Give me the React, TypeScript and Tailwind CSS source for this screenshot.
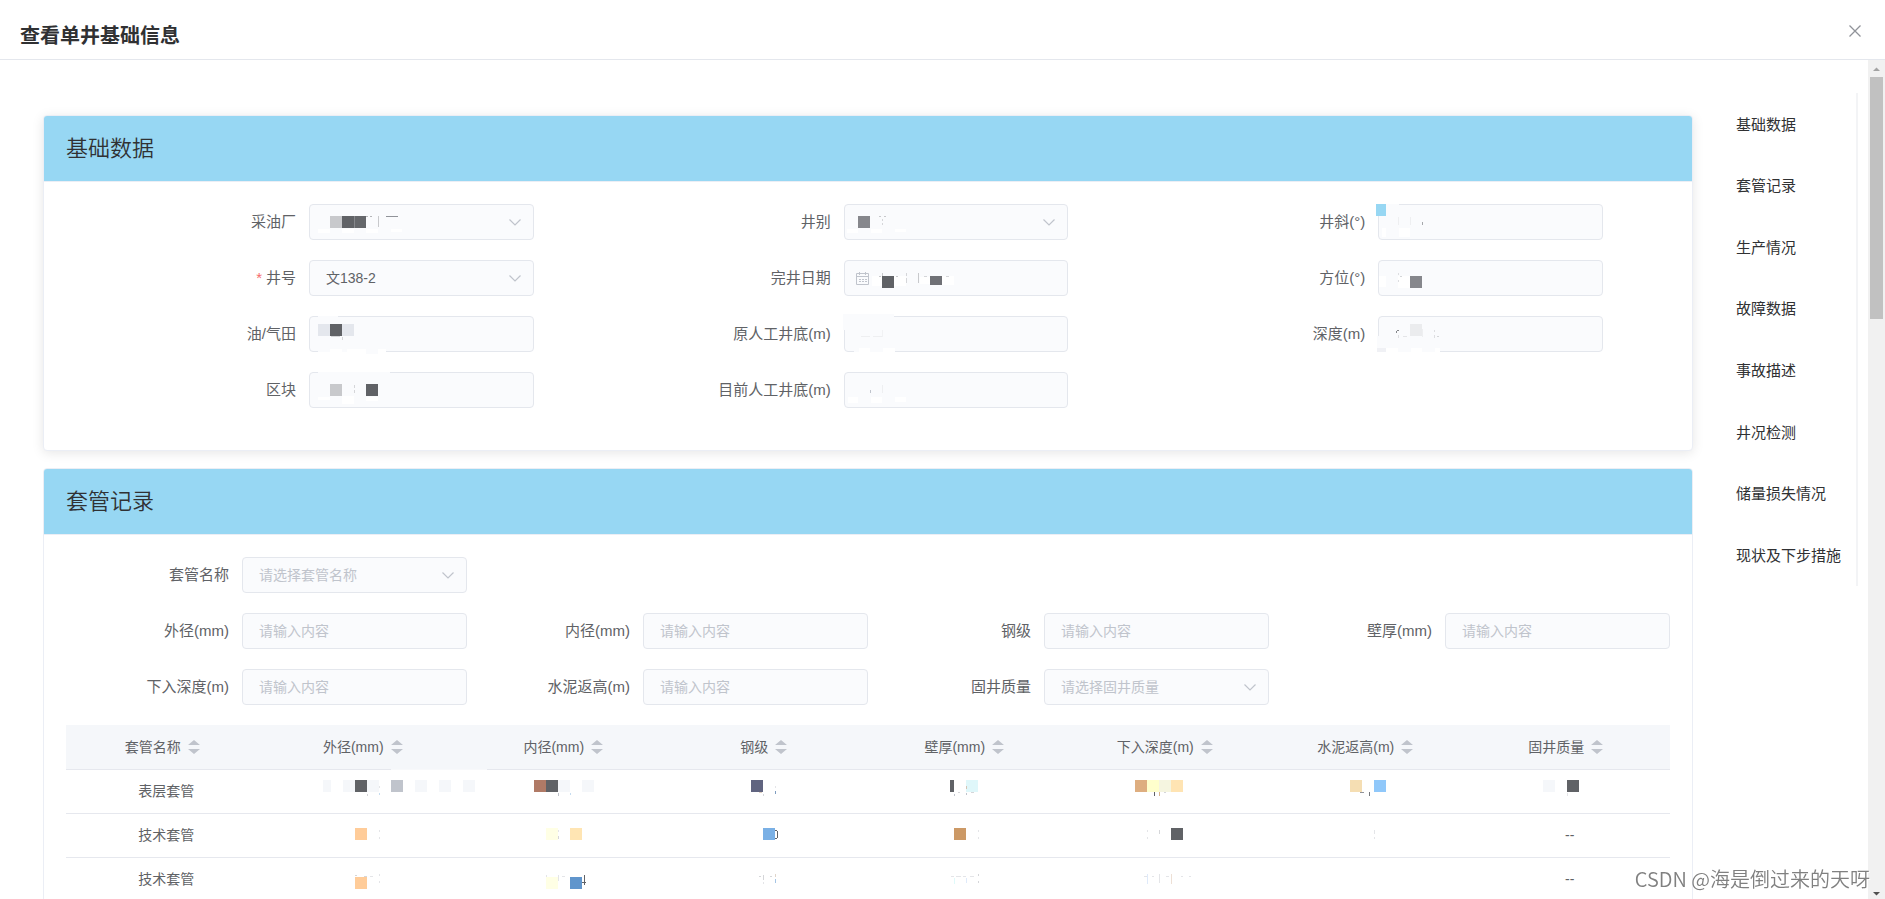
import React, { useState } from "react";

type Block = [x: number, y: number, w: number, h: number, color: string];

type FieldProps = {
  id: string;
  label: string;
  kind?: "input" | "select" | "date";
  value?: string;
  placeholder?: string;
  required?: boolean;
  mask?: Block[];
};

const PAPER = "#fafbfd";

const baseFields: FieldProps[] = [
  {
    id: "factory",
    label: "采油厂",
    kind: "select",
    mask: [
      [21, 12, 12, 12, "#c8c9cc"],
      [33, 12, 12, 12, "#606266"],
      [45, 12, 12, 12, "#65676b"],
      [45, 12, 1, 12, "#85878b"],
      [57, 12, 2, 1, "#b5b6b9"],
      [61, 12, 2, 1, "#b5b6b9"],
      [69, 12, 1, 11, "#c8c9cc"],
      [77, 12, 12, 1, "#909399"],
      [9, 25, 12, 4, "#ffffff"],
      [33, 25, 12, 4, "#ffffff"],
      [57, 25, 12, 4, "#ffffff"],
      [82, 25, 11, 3, "#ffffff"],
    ],
  },
  {
    id: "wellType",
    label: "井别",
    kind: "select",
    mask: [
      [14, 12, 12, 12, "#86878c"],
      [35, 12, 2, 1, "#c8c9cc"],
      [40, 12, 2, 1, "#c8c9cc"],
      [38, 15, 1, 2, "#d5d6d9"],
      [38, 19, 1, 2, "#d5d6d9"],
      [3, 25, 11, 4, "#ffffff"],
      [27, 25, 11, 4, "#ffffff"],
      [51, 25, 11, 3, "#ffffff"],
    ],
  },
  {
    id: "inclination",
    label: "井斜(°)",
    mask: [
      [8, 0, 13, 1, PAPER],
      [-2, 0, 10, 12, "#97d7f3"],
      [20, 13, 1, 8, "#eeeff1"],
      [32, 13, 1, 8, "#eeeff1"],
      [44, 18, 1, 3, "#a5a7ab"],
      [4, 24, 4, 9, "#ffffff"],
      [21, 24, 11, 9, "#ffffff"],
    ],
  },
  { id: "wellNo", label: "井号", kind: "select", value: "文138-2", required: true },
  {
    id: "finishDate",
    label: "完井日期",
    kind: "date",
    mask: [
      [28, 16, 10, 10, "#ffffff"],
      [50, 16, 12, 10, "#ffffff"],
      [76, 17, 10, 7, "#ffffff"],
      [98, 16, 12, 9, "#ffffff"],
      [38, 16, 12, 12, "#606266"],
      [86, 16, 12, 9, "#707176"],
      [35, 16, 2, 1, "#c8c9cc"],
      [38, 13, 1, 3, "#c8c9cc"],
      [52, 16, 2, 1, "#c8c9cc"],
      [62, 13, 1, 3, "#d5d6d9"],
      [62, 18, 1, 5, "#d5d6d9"],
      [74, 13, 1, 10, "#c8c9cc"],
      [80, 16, 3, 1, "#d5d6d9"],
      [102, 16, 3, 1, "#d5d6d9"],
    ],
  },
  {
    id: "azimuth",
    label: "方位(°)",
    mask: [
      [1, 16, 7, 11, "#ffffff"],
      [20, 16, 12, 12, "#ffffff"],
      [20, 13, 1, 2, "#dddee1"],
      [22, 16, 2, 1, "#d5d6d9"],
      [20, 20, 1, 2, "#dddee1"],
      [32, 16, 12, 12, "#86878c"],
    ],
  },
  {
    id: "field",
    label: "油/气田",
    mask: [
      [9, 0, 20, 1, PAPER],
      [9, 8, 12, 12, "#e4e7ed"],
      [21, 8, 12, 12, "#606266"],
      [33, 8, 12, 12, "#e4e7ed"],
      [22, 20, 9, 1, "#d5d6d9"],
      [33, 21, 1, 3, "#d5d6d9"],
      [9, 34, 68, 2, PAPER],
      [21, 33, 12, 3, "#ffffff"],
      [38, 33, 19, 3, "#ffffff"],
      [57, 33, 12, 5, PAPER],
      [69, 33, 8, 3, "#ffffff"],
    ],
  },
  {
    id: "originBottom",
    label: "原人工井底(m)",
    mask: [
      [-1, -2, 51, 16, PAPER],
      [17, 20, 9, 1, "#eeeff1"],
      [29, 20, 9, 1, "#eeeff1"],
      [38, 14, 1, 7, "#f1f2f4"],
      [10, 34, 41, 2, PAPER],
      [15, 32, 11, 4, "#ffffff"],
      [39, 32, 12, 4, "#ffffff"],
    ],
  },
  {
    id: "depth",
    label: "深度(m)",
    mask: [
      [32, 8, 12, 12, "#ebecee"],
      [19, 14, 2, 1, "#85878b"],
      [18, 15, 1, 2, "#85878b"],
      [20, 19, 1, 3, "#dddee1"],
      [25, 20, 4, 1, "#e4e5e8"],
      [44, 13, 1, 8, "#eeeff1"],
      [56, 14, 1, 2, "#dddee1"],
      [56, 19, 1, 3, "#dddee1"],
      [59, 20, 2, 1, "#d5d6d9"],
      [-1, 20, 10, 12, PAPER],
      [-1, 32, 9, 4, "#f0f1f5"],
      [8, 32, 54, 4, "#ffffff"],
      [20, 32, 13, 4, PAPER],
      [44, 32, 13, 4, PAPER],
    ],
  },
  {
    id: "block",
    label: "区块",
    mask: [
      [9, 0, 72, 1, PAPER],
      [21, 12, 12, 12, "#c8c9cc"],
      [45, 13, 1, 3, "#d5d6d9"],
      [45, 18, 1, 3, "#d5d6d9"],
      [57, 12, 12, 12, "#606266"],
      [9, 25, 12, 3, "#ffffff"],
      [33, 24, 12, 8, "#ffffff"],
      [57, 25, 12, 4, "#ffffff"],
    ],
  },
  {
    id: "currentBottom",
    label: "目前人工井底(m)",
    mask: [
      [26, 18, 1, 3, "#c0c4cc"],
      [38, 13, 1, 8, "#eeeff1"],
      [4, 25, 10, 6, "#ffffff"],
      [27, 25, 11, 6, "#ffffff"],
      [51, 25, 11, 5, "#ffffff"],
    ],
  },
];

const casingFields: FieldProps[] = [
  { id: "outer", label: "外径(mm)", placeholder: "请输入内容" },
  { id: "inner", label: "内径(mm)", placeholder: "请输入内容" },
  { id: "steel", label: "钢级", placeholder: "请输入内容" },
  { id: "wall", label: "壁厚(mm)", placeholder: "请输入内容" },
  { id: "runDepth", label: "下入深度(m)", placeholder: "请输入内容" },
  { id: "cement", label: "水泥返高(m)", placeholder: "请输入内容" },
  { id: "quality", label: "固井质量", kind: "select", placeholder: "请选择固井质量" },
];

const columns = [
  "套管名称",
  "外径(mm)",
  "内径(mm)",
  "钢级",
  "壁厚(mm)",
  "下入深度(m)",
  "水泥返高(m)",
  "固井质量",
];

// A cell is either plain text or a list of mask blocks
const rows: (string | Block[])[][] = [
  [
    "表层套管",
    [
      [124, -1, 96, 1, "#f8f9fb"],
      [56, 10, 8, 12, "#f5f7fa"],
      [76, 10, 12, 12, "#f5f7fa"],
      [88, 10, 12, 12, "#606266"],
      [100, 10, 12, 12, "#f5f7fa"],
      [124, 10, 12, 12, "#c0c4cc"],
      [148, 10, 12, 12, "#f5f7fa"],
      [172, 10, 12, 12, "#f5f7fa"],
      [196, 10, 12, 12, "#f5f7fa"],
      [100, 24, 1, 2, "#d5d6d9"],
      [112, 16, 1, 2, "#e4e5e8"],
      [112, 23, 1, 2, "#c5dcf0"],
    ],
    [
      [67, 10, 12, 12, "#b07a66"],
      [79, 10, 12, 12, "#606266"],
      [91, 10, 12, 12, "#f5f7fa"],
      [115, 10, 12, 12, "#f5f7fa"],
      [91, 23, 1, 3, "#c0c4cc"],
      [103, 23, 1, 2, "#c5dcf0"],
    ],
    [
      [83, 10, 12, 12, "#606480"],
      [91, 22, 3, 1, "#e0cfc0"],
      [95, 24, 1, 2, "#d5d6d9"],
      [107, 16, 1, 2, "#e4e5e8"],
      [107, 21, 1, 3, "#7f9dc0"],
    ],
    [
      [82, 10, 4, 12, "#606266"],
      [98, 10, 12, 12, "#dff7fa"],
      [86, 24, 1, 2, "#c0c4cc"],
      [90, 22, 2, 1, "#d5d6d9"],
      [98, 16, 1, 3, "#d5c5b5"],
      [98, 23, 1, 2, "#c0c4cc"],
      [103, 22, 3, 1, "#d5d6d9"],
    ],
    [
      [66, 10, 12, 12, "#deae80"],
      [78, 10, 12, 12, "#ffffcc"],
      [90, 10, 12, 12, "#f5f5e0"],
      [102, 10, 12, 12, "#ffe4b3"],
      [85, 22, 1, 4, "#606266"],
      [90, 22, 1, 4, "#d9b38c"],
      [95, 22, 2, 1, "#d5d6d9"],
    ],
    [
      [81, 10, 12, 12, "#f5deb3"],
      [105, 10, 12, 12, "#90c8fa"],
      [91, 22, 4, 1, "#909399"],
      [100, 22, 1, 4, "#75777c"],
    ],
    [
      [73, 10, 12, 12, "#f5f7fa"],
      [97, 10, 12, 12, "#606266"],
      [97, 23, 1, 3, "#e4e5e8"],
    ],
  ],
  [
    "技术套管",
    [
      [88, 14, 12, 12, "#ffcc99"],
      [112, 16, 1, 2, "#e4e5e8"],
      [112, 23, 1, 2, "#e4e5e8"],
    ],
    [
      [79, 14, 12, 12, "#ffffe5"],
      [91, 16, 1, 2, "#e4e5e8"],
      [91, 22, 1, 3, "#d5d6d9"],
      [103, 14, 12, 12, "#ffe5b3"],
    ],
    [
      [95, 14, 12, 12, "#7ab0e5"],
      [107, 16, 2, 1, "#606266"],
      [109, 17, 1, 7, "#606266"],
      [107, 24, 2, 1, "#606266"],
    ],
    [
      [86, 14, 12, 12, "#cc9966"],
      [110, 16, 1, 2, "#e4e5e8"],
      [110, 23, 1, 2, "#e4e5e8"],
    ],
    [
      [78, 16, 1, 2, "#e4e5e8"],
      [78, 23, 1, 2, "#e4e5e8"],
      [90, 16, 1, 4, "#d5d6d9"],
      [102, 14, 12, 12, "#606266"],
    ],
    [
      [105, 16, 1, 4, "#e4e5e8"],
      [105, 23, 1, 2, "#e4e5e8"],
    ],
    "--",
  ],
  [
    "技术套管",
    [
      [88, 17, 2, 1, "#d5d6d9"],
      [97, 18, 3, 1, "#d5d6d9"],
      [88, 19, 12, 12, "#ffcc99"],
      [103, 18, 3, 1, "#e4e5e8"],
      [112, 16, 1, 2, "#e4e5e8"],
      [112, 23, 1, 2, "#e4e5e8"],
    ],
    [
      [79, 17, 1, 6, "#e4e5e8"],
      [79, 19, 12, 12, "#ffffe5"],
      [91, 17, 1, 6, "#e4e5e8"],
      [95, 18, 3, 1, "#e4e5e8"],
      [103, 19, 12, 12, "#6095cc"],
      [117, 17, 1, 10, "#606266"],
      [115, 24, 4, 1, "#606266"],
    ],
    [
      [91, 18, 2, 1, "#d5d6d9"],
      [95, 17, 1, 5, "#d5d6d9"],
      [95, 24, 1, 2, "#e4e5e8"],
      [102, 18, 2, 1, "#d5d6d9"],
      [107, 16, 1, 3, "#e0d5ca"],
      [107, 21, 1, 4, "#a5c5e5"],
    ],
    [
      [83, 18, 3, 1, "#e4e5e8"],
      [88, 18, 5, 1, "#e4e5e8"],
      [86, 20, 1, 6, "#e0fafa"],
      [95, 18, 3, 1, "#e4e5e8"],
      [98, 20, 1, 5, "#dfeafa"],
      [102, 18, 4, 1, "#e4e5e8"],
      [110, 16, 1, 2, "#d5d6d9"],
      [110, 23, 1, 2, "#d5d6d9"],
    ],
    [
      [75, 18, 3, 1, "#e4e5e8"],
      [78, 16, 1, 10, "#dfeafa"],
      [83, 18, 2, 1, "#e4e5e8"],
      [90, 16, 1, 9, "#e4e5e8"],
      [97, 18, 3, 1, "#e4e5e8"],
      [102, 16, 1, 10, "#eee0d5"],
      [112, 18, 2, 1, "#e4e5e8"],
      [120, 18, 2, 1, "#e4e5e8"],
    ],
    [],
    "--",
  ],
];

const anchors = [
  "基础数据",
  "套管记录",
  "生产情况",
  "故障数据",
  "事故描述",
  "井况检测",
  "储量损失情况",
  "现状及下步措施",
];

function Mask({ blocks }: { blocks: Block[] }) {
  return (
    <svg
      className="absolute inset-0 h-full w-full overflow-visible pointer-events-none"
      shapeRendering="crispEdges"
      aria-hidden="true"
    >
      {blocks.map(([x, y, w, h, color], i) => (
        <rect key={i} x={x} y={y} width={w} height={h} fill={color} />
      ))}
    </svg>
  );
}

function Chevron() {
  return (
    <svg
      className="absolute right-[13px] top-1/2 h-3 w-3 -translate-y-1/2 pointer-events-none"
      viewBox="0 0 12 12"
      fill="none"
      stroke="#c0c4cc"
      strokeWidth="1.2"
      aria-hidden="true"
    >
      <path d="M0.5 3.5 L6 9 L11.5 3.5" />
    </svg>
  );
}

function CalendarIcon() {
  return (
    <svg
      className="absolute left-3 top-3 h-[13px] w-[13px] pointer-events-none"
      viewBox="0 0 13 13"
      fill="none"
      stroke="#c0c4cc"
      aria-hidden="true"
    >
      <path d="M0.5 1.5 H12.5 V12.5 H0.5 Z M0.5 4.5 H12.5 M3.5 0 V3 M9.5 0 V3" />
      <path d="M3 7.5 H11 M3 9.5 H11" strokeDasharray="2 1" />
    </svg>
  );
}

function Field({ id, label, kind = "input", value, placeholder, required, mask }: FieldProps) {
  const box =
    "h-9 w-full rounded border border-[#e4e7ed] bg-[#fafbfd] px-4 text-sm focus:outline-none";

  return (
    <>
      <label htmlFor={id} className="text-right text-[15px] text-[#606266] whitespace-nowrap">
        {required && <span className="mr-1 text-[#f56c6c]">*</span>}
        {label}
      </label>
      <div className="relative">
        {kind === "select" ? (
          <>
            <select
              id={id}
              className={`${box} appearance-none ${value ? "text-[#606266]" : "text-[#c0c4cc]"}`}
            >
              <option>{value || placeholder || ""}</option>
            </select>
            <Chevron />
          </>
        ) : (
          <input
            id={id}
            type="text"
            readOnly
            defaultValue={value}
            placeholder={placeholder}
            className={`${box} text-[#606266] placeholder:text-[#c0c4cc]`}
          />
        )}
        {kind === "date" && <CalendarIcon />}
        {mask && <Mask blocks={mask} />}
      </div>
    </>
  );
}

function Card({
  title,
  raised,
  children,
}: {
  title: string;
  raised?: boolean;
  children: React.ReactNode;
}) {
  return (
    <section
      className={`rounded border border-[#ebeef5] bg-white ${
        raised ? "shadow-[0_2px_12px_rgba(0,0,0,0.1)]" : ""
      }`}
    >
      <h2 className="flex h-[66px] items-center rounded-t-[3px] border-b border-[#ebeef5] bg-[#97d7f3] px-[22px] text-[22px] font-[350] text-[#303133]">
        {title}
      </h2>
      <div className="p-[22px]">{children}</div>
    </section>
  );
}

function CasingTable() {
  const [sorted, setSorted] = useState("");

  return (
    <table className="w-full table-fixed border-collapse text-center text-sm text-[#606266]">
      <thead>
        <tr className="h-11 border-b border-[#e6e8ee] bg-[#f5f7fa]">
          {columns.map((name) => (
            <th key={name} className="p-0 font-normal">
              <button
                type="button"
                className="inline-flex items-center"
                aria-pressed={sorted === name}
                onClick={() => setSorted(name)}
              >
                {name}
                <svg className="ml-[7px] mr-2 h-[14px] w-3" viewBox="0 0 12 14" fill="#c0c4cc">
                  <path d="M6 0 L12 5 H0 Z M6 14 L12 9 H0 Z" />
                </svg>
              </button>
            </th>
          ))}
        </tr>
      </thead>
      <tbody>
        {rows.map((row, i) => (
          <tr key={i} className="h-11 border-b border-[#e6e8ee]">
            {row.map((cell, j) => (
              <td key={j} className="relative p-0">
                {typeof cell === "string" ? cell : <Mask blocks={cell} />}
              </td>
            ))}
          </tr>
        ))}
      </tbody>
    </table>
  );
}

function Scrollbar() {
  return (
    <div className="flex w-[17px] shrink-0 flex-col bg-[#f1f1f1]" aria-hidden="true">
      <svg className="h-[17px] w-[17px] shrink-0" viewBox="0 0 17 17" fill="#a3a3a3">
        <path d="M5 11 H12 L8.5 7.5 Z" />
      </svg>
      <div className="flex-1 px-0.5">
        <div className="h-[30%] bg-[#c1c1c1]" />
      </div>
      <svg className="h-[17px] w-[17px] shrink-0" viewBox="0 0 17 17" fill="#505050">
        <path d="M5 10 H12 L8.5 13.5 Z" />
      </svg>
    </div>
  );
}

export default function App() {
  return (
    <div className="flex h-screen flex-col bg-white font-['Liberation_Sans','Noto_Sans_CJK_SC',sans-serif]">
      <header className="flex h-[60px] shrink-0 items-start justify-between border-b border-[#e4e7ed] px-5 pt-[22px]">
        <h1 className="text-xl leading-7 font-bold text-[#303133]">查看单井基础信息</h1>
        <button type="button" aria-label="关闭" className="flex h-[18px] w-5 items-center justify-center">
          <svg className="h-3 w-3" viewBox="0 0 12 12" stroke="#909399" strokeWidth="1.3">
            <path d="M0.5 0.5 L11.5 11.5 M11.5 0.5 L0.5 11.5" />
          </svg>
        </button>
      </header>

      <div className="flex min-h-0 flex-1">
        <main className="flex min-w-0 flex-1 items-start overflow-y-auto pl-[43px] pr-[10px] [scrollbar-width:none]">
          <div className="flex min-w-0 flex-1 flex-col gap-[17px] pt-[55px] pb-6">
            <Card title="基础数据" raised>
              <form className="grid grid-cols-3">
                {baseFields.map((field) => (
                  <div
                    key={field.id}
                    className="mb-5 grid grid-cols-[230px_1fr] items-center gap-[13px] pr-[67px]"
                  >
                    <Field {...field} />
                  </div>
                ))}
              </form>
            </Card>

            <Card title="套管记录">
              <form className="grid grid-cols-4">
                <div className="col-span-4 grid grid-cols-4">
                  <div className="mb-5 grid grid-cols-[163px_1fr] items-center gap-[13px]">
                    <Field
                      id="casingName"
                      label="套管名称"
                      kind="select"
                      placeholder="请选择套管名称"
                    />
                  </div>
                </div>
                {casingFields.map((field) => (
                  <div
                    key={field.id}
                    className="mb-5 grid grid-cols-[163px_1fr] items-center gap-[13px]"
                  >
                    <Field {...field} />
                  </div>
                ))}
              </form>
              <CasingTable />
            </Card>
          </div>

          {/* Anchor list beside the cards */}
          <nav className="mt-[33px] ml-[43px] flex h-[493px] w-[122px] shrink-0 flex-col border-r-2 border-[#f3f4f6]">
            {anchors.map((name) => (
              <a
                key={name}
                href={`#${name}`}
                className="flex flex-1 items-center pt-0.5 whitespace-nowrap text-[15px] text-[#303133]"
              >
                {name}
              </a>
            ))}
          </nav>
        </main>
        <Scrollbar />
      </div>

      {/* Watermark over the bottom corner */}
      <div className="fixed right-[15px] bottom-1 text-xl leading-8 font-[350] whitespace-nowrap text-[#808080] font-['Noto_Sans_CJK_SC',sans-serif] [text-shadow:1px_1px_0_#ffffff] pointer-events-none">
        CSDN @海是倒过来的天呀
      </div>
    </div>
  );
}
